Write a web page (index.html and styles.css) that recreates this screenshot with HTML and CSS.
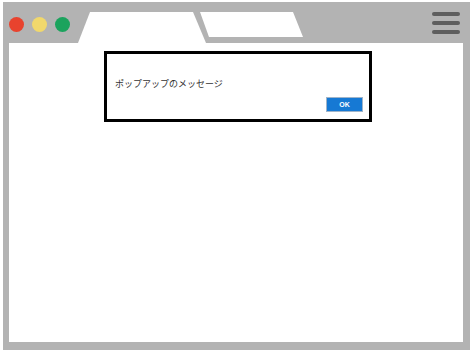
FILE: index.html
```html
<!DOCTYPE html>
<html lang="ja">
<head>
    <meta charset="UTF-8">
    <meta name="viewport" content="width=device-width, initial-scale=1.0">
    <title>ポップアップ</title>
    <link rel="stylesheet" href="styles.css">
</head>
<body>
    <div class="window">
        <div class="titlebar">
            <div class="lights">
                <span class="light red"></span>
                <span class="light yellow"></span>
                <span class="light green"></span>
            </div>
            <div class="tab tab-active"></div>
            <div class="tab tab-back"></div>
            <div class="spacer"></div>
            <div class="menu">
                <span></span>
                <span></span>
                <span></span>
            </div>
        </div>
        <div class="content">
            <div class="dialog">
                <div class="dialog-text">ポップアップのメッセージ</div>
                <div class="dialog-actions">
                    <button class="ok-button">OK</button>
                </div>
            </div>
        </div>
    </div>
</body>
</html>
```

FILE: styles.css
```css
body {
    margin: 0;
    background: white;
    font-family: "Noto Sans CJK JP", "Liberation Sans", sans-serif;
}

.window {
    margin: 2px 0 0 3px;
    width: 467px;
    height: 348px;
    box-sizing: border-box;
    padding: 0 7px 8px 6px;
    background: #b3b3b3;
    display: flex;
    flex-direction: column;
}

.titlebar {
    height: 41px;
    display: flex;
    align-items: flex-start;
}

.lights {
    display: flex;
    gap: 8px;
    margin-top: 15px;
}

.light {
    width: 15px;
    height: 15px;
    border-radius: 50%;
}

.red { background: #e8432e; }
.yellow { background: #f1d86c; }
.green { background: #1ba35d; }

.tab {
    background: white;
    margin-top: 10px;
}

.tab-active {
    margin-left: 8px;
    width: 128px;
    height: 31px;
    clip-path: polygon(12px 0, 115px 0, 100% 100%, 0 100%);
}

.tab-back {
    margin-left: -6px;
    width: 103px;
    height: 25px;
    clip-path: polygon(0 0, 93px 0, 100% 100%, 9px 100%);
}

.spacer {
    flex: 1;
}

.menu {
    margin: 10px 3px 0 0;
    display: flex;
    flex-direction: column;
    gap: 5px;
}

.menu span {
    width: 28px;
    height: 4px;
    border-radius: 2px;
    background: #5e5e5e;
}

.content {
    flex: 1;
    background: white;
}

.dialog {
    margin: 8px 0 0 95px;
    width: 268px;
    height: 71px;
    box-sizing: border-box;
    border: 3px solid #000;
    padding: 24px 6px 7px 8px;
}

.dialog-text {
    font-size: 9px;
    line-height: 12px;
    color: #333;
}

.dialog-actions {
    display: flex;
    justify-content: flex-end;
    margin-top: 7px;
}

.ok-button {
    width: 37px;
    height: 15px;
    padding: 0;
    border: 1px solid #9fb4c9;
    background: #1679d4;
    color: white;
    font-family: "Liberation Sans", sans-serif;
    font-size: 7px;
    font-weight: bold;
}
```
